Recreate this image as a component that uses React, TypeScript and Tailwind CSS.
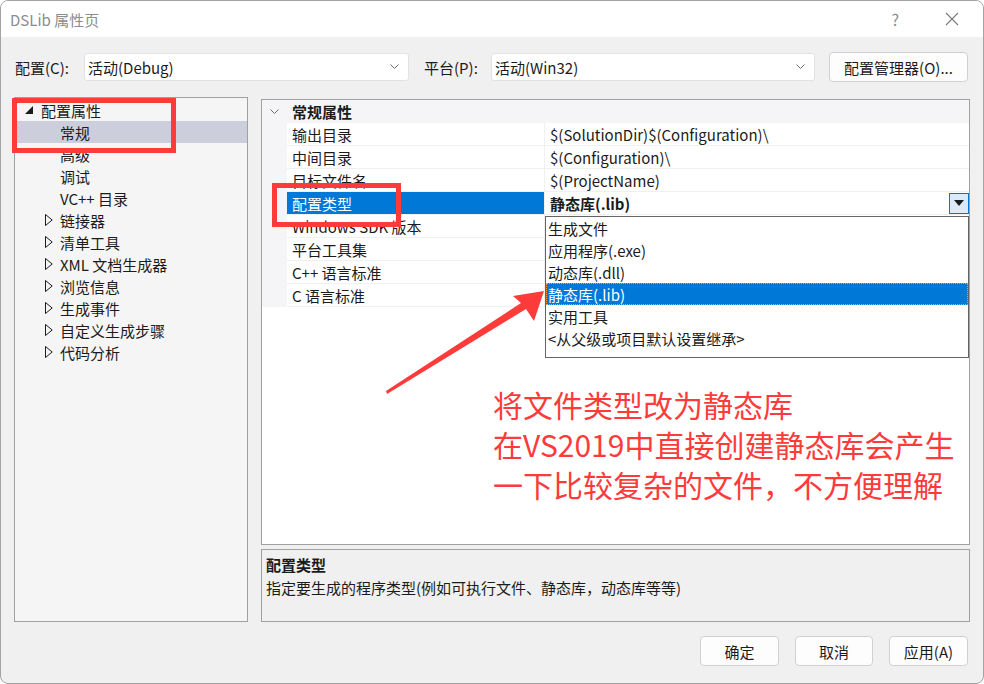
import React from "react";

const tree: { label: string; kind: "open" | "child" | "closed"; selected?: boolean }[] = [
  { label: "配置属性", kind: "open" },
  { label: "常规", kind: "child", selected: true },
  { label: "高级", kind: "child" },
  { label: "调试", kind: "child" },
  { label: "VC++ 目录", kind: "child" },
  { label: "链接器", kind: "closed" },
  { label: "清单工具", kind: "closed" },
  { label: "XML 文档生成器", kind: "closed" },
  { label: "浏览信息", kind: "closed" },
  { label: "生成事件", kind: "closed" },
  { label: "自定义生成步骤", kind: "closed" },
  { label: "代码分析", kind: "closed" },
];

const props: { name: string; value: string; selected?: boolean }[] = [
  { name: "输出目录", value: "$(SolutionDir)$(Configuration)\\" },
  { name: "中间目录", value: "$(Configuration)\\" },
  { name: "目标文件名", value: "$(ProjectName)" },
  { name: "配置类型", value: "静态库(.lib)", selected: true },
  { name: "Windows SDK 版本", value: "" },
  { name: "平台工具集", value: "" },
  { name: "C++ 语言标准", value: "" },
  { name: "C 语言标准", value: "" },
];

const options = ["生成文件", "应用程序(.exe)", "动态库(.dll)", "静态库(.lib)", "实用工具", "<从父级或项目默认设置继承>"];

function Chevron() {
  return (
    <svg width="9" height="6" viewBox="0 0 9 6" className="shrink-0">
      <path d="M0.5 0.5 L4.5 4.5 L8.5 0.5" fill="none" stroke="#6b6b6b" strokeWidth="1" />
    </svg>
  );
}

function SelectBox({ value }: { value: string }) {
  return (
    <div className="flex h-[28px] items-center justify-between rounded-[3px] border border-[#e2e2e2] bg-white pl-[3px] pr-[9px]">
      <span>{value}</span>
      <Chevron />
    </div>
  );
}

function Button({ label, className }: { label: string; className: string }) {
  return (
    <div
      className={`flex h-[30px] items-center justify-center rounded-[4px] border border-[#d0d0d0] bg-[#fdfdfd] ${className}`}
    >
      {label}
    </div>
  );
}

export default function App() {
  return (
    <div className="relative h-[684px] w-[984px] overflow-hidden bg-white font-['Noto_Sans_CJK_SC',sans-serif] text-[15px] leading-none text-[#1b1b1b]">
      <div className="flex h-full flex-col overflow-hidden rounded-[8px] border border-[#a3a3a3] bg-[#f0f0f0]">
        {/* title bar */}
        <div className="flex h-[36px] shrink-0 items-center justify-between bg-white pl-[9px] pr-[24px]">
          <span className="text-[#8c8c8c]">DSLib 属性页</span>
          <div className="flex items-center gap-[46px] text-[#8c8c8c]">
            <span className="text-[16px]">?</span>
            <svg width="14" height="14" viewBox="0 0 14 14">
              <path d="M1 1 L13 13 M13 1 L1 13" stroke="#7a7a7a" strokeWidth="1.1" />
            </svg>
          </div>
        </div>

        {/* configuration row */}
        <div className="mt-[15px] flex h-[30px] shrink-0 items-center pl-[14px] pr-[15px]">
          <span className="w-[69px]">配置(C):</span>
          <div className="w-[325px]">
            <SelectBox value="活动(Debug)" />
          </div>
          <span className="ml-[15px] w-[67px]">平台(P):</span>
          <div className="w-[324px]">
            <SelectBox value="活动(Win32)" />
          </div>
          <Button label="配置管理器(O)..." className="ml-[14px] w-[139px]" />
        </div>

        {/* main area */}
        <div className="mt-[15px] flex h-[525px] shrink-0 pl-[13px]">
          {/* tree */}
          <div className="w-[234px] border border-[#a0a0a0] bg-[#f5f5f5] pt-[1px]">
            {tree.map((t) => (
              <div
                key={t.label}
                className={`flex h-[22px] items-center ${t.selected ? "ml-[2px] bg-[#cccedb]" : ""} ${
                  t.kind === "open" ? "pl-[10px]" : t.kind === "closed" ? "pl-[30px]" : t.selected ? "pl-[43px]" : "pl-[45px]"
                }`}
              >
                {t.kind === "open" && (
                  <svg width="8" height="8" viewBox="0 0 8 8" className="mr-[8px]">
                    <polygon points="8,0 8,8 0,8" fill="#1b1b1b" />
                  </svg>
                )}
                {t.kind === "closed" && (
                  <svg width="8" height="12" viewBox="0 0 8 12" className="mr-[7px]">
                    <polygon points="0.5,0.5 7.2,6 0.5,11.5" fill="none" stroke="#1b1b1b" strokeWidth="1" />
                  </svg>
                )}
                <span>{t.label}</span>
              </div>
            ))}
          </div>

          {/* right column */}
          <div className="ml-[13px] flex w-[709px] flex-col">
            <div className="mt-[2px] h-[447px] border border-[#a0a0a0] bg-white">
              <div className="flex h-[23px] items-center bg-[#f5f5f7]">
                <div className="flex w-[25px] justify-center">
                  <Chevron />
                </div>
                <span className="pl-[5px] font-bold">常规属性</span>
              </div>
              {props.map((p) => (
                <div key={p.name} className="flex h-[23px]">
                  <div className="w-[25px] bg-[#f5f5f7]" />
                  <div
                    className={`flex w-[258px] items-center border-b border-r border-[#f0f0f0] pl-[5px] ${
                      p.selected ? "bg-[#0078d7] text-white" : ""
                    }`}
                  >
                    {p.name}
                  </div>
                  <div className="flex flex-1 items-center justify-between border-b border-[#f0f0f0] pl-[5px]">
                    <span className={p.selected ? "font-bold" : ""}>{p.value}</span>
                    {p.selected && (
                      <div className="flex h-[21px] w-[20px] items-center justify-center border border-[#0078d7] bg-[#dceaf8]">
                        <svg width="10" height="6" viewBox="0 0 10 6">
                          <polygon points="0,0 10,0 5,6" fill="#1b1b1b" />
                        </svg>
                      </div>
                    )}
                  </div>
                </div>
              ))}
            </div>

            {/* description */}
            <div className="mt-[4px] h-[73px] border border-[#a0a0a0] bg-[#f0f0f0] px-[4px] pt-[7px]">
              <div className="font-bold">配置类型</div>
              <div className="mt-[8px]">指定要生成的程序类型(例如可执行文件、静态库，动态库等等)</div>
            </div>
          </div>
        </div>

        {/* buttons */}
        <div className="mt-[14px] flex justify-end gap-[16px] pr-[15px]">
          <Button label="确定" className="w-[79px]" />
          <Button label="取消" className="w-[78px]" />
          <Button label="应用(A)" className="w-[79px]" />
        </div>
      </div>

      {/* dropdown list */}
      <div className="absolute left-[545px] top-[216px] h-[142px] w-[424px] border border-[#646464] bg-white">
        {options.map((o) => (
          <div
            key={o}
            className={`flex h-[22px] items-center pl-[2px] ${
              o === "静态库(.lib)" ? "bg-[#0078d7] text-white outline-1 outline-dotted outline-offset-[-1px] outline-[#ff9f40]" : ""
            }`}
          >
            {o}
          </div>
        ))}
      </div>

      {/* annotations */}
      <div className="absolute left-[12px] top-[98px] h-[55px] w-[164px] border-[5px] border-[#fd3b3b]" />
      <div className="absolute left-[272px] top-[183px] h-[44px] w-[129px] border-[5px] border-[#fd3b3b]" />
      <svg className="absolute left-0 top-0" width="984" height="684" viewBox="0 0 984 684">
        <polygon
          points="387,394 526,309 534,321 544,291 513,296 521,303 386,391"
          fill="#fd3b3b"
        />
      </svg>
      <div className="absolute left-[493px] top-[384px] flex flex-col text-[30px] leading-[40px] text-[#fd3b3b]">
        <div className="h-[40px]">将文件类型改为静态库</div>
        <div className="h-[40px]">在VS2019中直接创建静态库会产生</div>
        <div className="h-[40px]">一下比较复杂的文件，不方便理解</div>
      </div>
    </div>
  );
}
